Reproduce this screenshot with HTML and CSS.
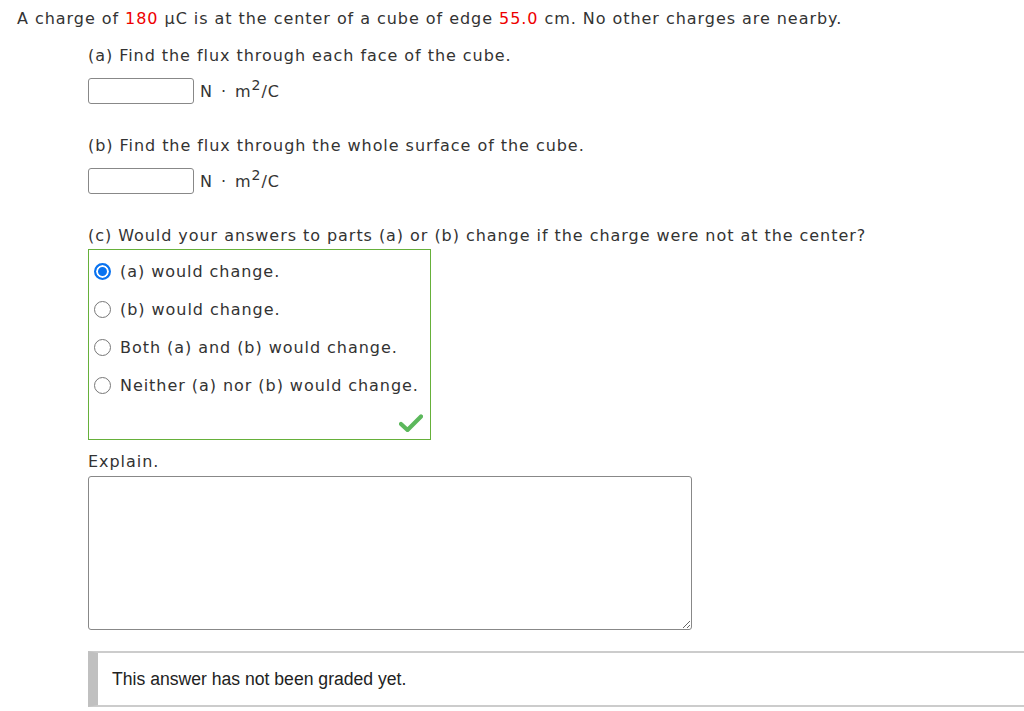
FILE: index.html
```html
<!DOCTYPE html>
<html lang="en">
<head>
  <meta charset="UTF-8">
  <meta name="viewport" content="width=device-width, initial-scale=1.0">
  <title>Gauss's Law Question</title>
  <link rel="stylesheet" href="styles.css">
</head>
<body>
  <div class="question">
    <p class="intro">A charge of <span class="given">180</span> &mu;C is at the center of a cube of edge <span class="given">55.0</span> cm. No other charges are nearby.</p>

    <div class="parts">
      <p class="prompt">(a) Find the flux through each face of the cube.</p>
      <div class="answer">
        <input type="text" class="blank">
        <span class="unit">N &middot; m<sup>2</sup>/C</span>
      </div>

      <p class="prompt">(b) Find the flux through the whole surface of the cube.</p>
      <div class="answer">
        <input type="text" class="blank">
        <span class="unit">N &middot; m<sup>2</sup>/C</span>
      </div>

      <p class="prompt prompt-c">(c) Would your answers to parts (a) or (b) change if the charge were not at the center?</p>
      <div class="choices">
        <label class="choice"><input type="radio" name="c" checked> (a) would change.</label>
        <label class="choice"><input type="radio" name="c"> (b) would change.</label>
        <label class="choice"><input type="radio" name="c"> Both (a) and (b) would change.</label>
        <label class="choice"><input type="radio" name="c"> Neither (a) nor (b) would change.</label>
        <div class="mark">
          <!-- correct answer tick -->
          <svg width="24" height="18" viewBox="0 0 24 18">
            <path d="M2 10 L8.5 16 L22 2.5" fill="none" stroke="#5cb85c" stroke-width="4.2" stroke-linecap="round" stroke-linejoin="round"/>
          </svg>
        </div>
      </div>

      <p class="prompt explain">Explain.</p>
      <textarea class="essay"></textarea>

      <div class="graded">This answer has not been graded yet.</div>
    </div>
  </div>
</body>
</html>
```

FILE: styles.css
```css
body {
  margin: 0;
  font-family: "DejaVu Sans", Verdana, sans-serif;
  font-size: 16px;
  letter-spacing: 0.95px;
  color: #333;
  background: #fff;
  overflow-x: hidden;
}
.question {
  padding: 9px 0 0 17px;
}
p {
  margin: 0;
  line-height: 20px;
}
.given {
  color: #e00;
}
.parts {
  margin-left: 71px;
}
.prompt {
  margin-top: 17px;
}
.answer {
  display: flex;
  align-items: center;
  margin-top: 12px;
  margin-bottom: 32px;
  height: 26px;
}
.answer + .prompt {
  margin-top: 0;
}
.blank {
  box-sizing: border-box;
  width: 106px;
  height: 26px;
  margin: 0;
  border: 1px solid #888;
  border-radius: 3px;
  font: inherit;
}
.unit {
  margin-left: 6px;
  word-spacing: 2px;
}
.unit sup {
  font-size: 14px;
  line-height: 0;
  vertical-align: 7px;
}
.choices {
  box-sizing: border-box;
  width: 343px;
  height: 191px;
  margin-top: 3px;
  padding-top: 2px;
  border: 1px solid #66b03a;
}
.choice {
  display: flex;
  align-items: center;
  height: 38px;
  padding-left: 5px;
}
.choice input {
  appearance: none;
  box-sizing: border-box;
  width: 17px;
  height: 17px;
  margin: 0 9px 0 0;
  border: 1px solid #777;
  border-radius: 50%;
  background: #fff;
}
.choice input:checked {
  border: 2px solid #0a73f0;
  box-shadow: inset 0 0 0 2px #fff;
  background: #0a73f0;
}
.mark {
  display: flex;
  justify-content: flex-end;
  padding: 10px 7px 0 0;
}
.explain {
  margin-top: 12px;
}
.essay {
  display: block;
  box-sizing: border-box;
  width: 604px;
  height: 154px;
  margin-top: 4px;
  border: 1px solid #888;
  border-radius: 3px;
  font: inherit;
}
.graded {
  margin-top: 21px;
  padding: 17px 0 17px 14px;
  border-top: 2px solid #ccc;
  border-bottom: 2px solid #ccc;
  border-left: 10px solid #c0c0c0;
  font-family: "Liberation Sans", Arial, sans-serif;
  font-size: 17.6px;
  letter-spacing: 0;
  line-height: 18px;
  color: #222;
}
```
